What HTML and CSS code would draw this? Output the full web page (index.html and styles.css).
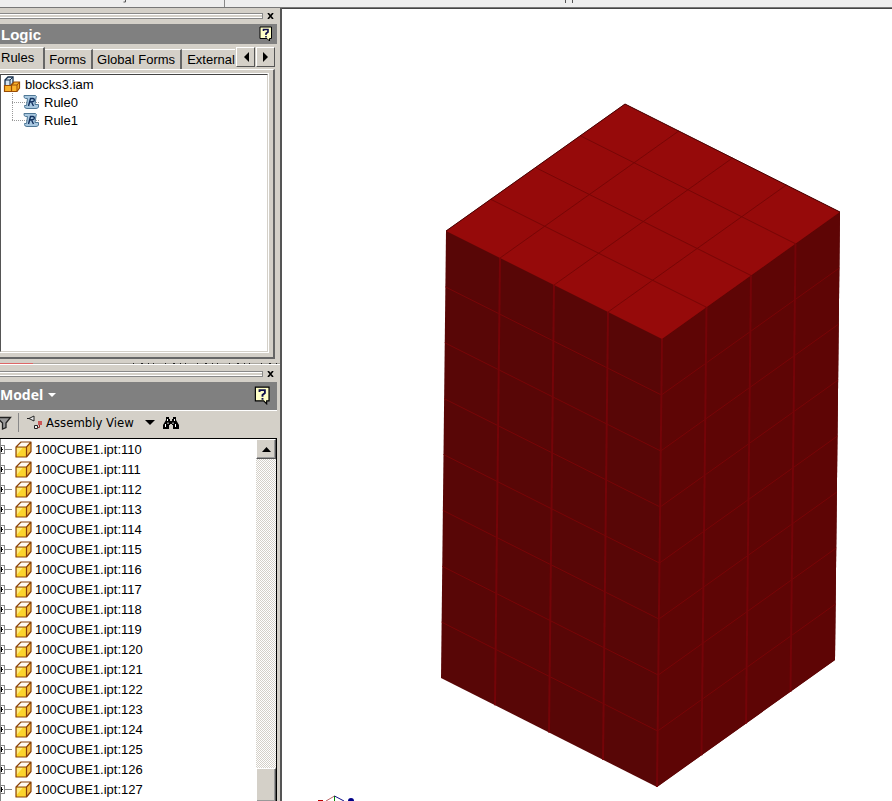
FILE: index.html
```
<!DOCTYPE html>
<html lang="en">
<head>
    <meta charset="UTF-8">
    <meta name="viewport" content="width=device-width, initial-scale=1.0">
    <title>blocks3.iam</title>
    <link rel="stylesheet" href="styles.css">
</head>
<body>
    <svg class="defs" width="0" height="0" aria-hidden="true">
        <symbol id="icon-part" viewBox="0 0 17 17">
            <path d="M1 6 6 1H16V10.500L11.500 16H1Z" fill="#fbd42c"/>
            <path d="M1 6 6 1H16L11.500 6Z" fill="#fffaf0"/>
            <path d="M11.500 6 16 1V10.500L11.500 16Z" fill="#f6bc3c"/>
            <path d="M1.500 14V6.500H8Z" fill="#ffec80"/>
            <path d="M1 6 6 1H16V10.500L11.500 16H1ZM1 6H11.500V16M11.500 6 16 1" fill="none" stroke="#8a4208" stroke-width="1.200" stroke-linejoin="round"/>
        </symbol>
        <symbol id="icon-rule" viewBox="0 0 17 16">
            <path d="M1 1.500H12.500Q14 2 13 4L12 10.500H15.500V13Q15 14.500 13 14.500H4Q1.500 14.500 1.500 12.500V11.500H3.500L4.500 4.500H2.500Q.5 4 1 1.500Z" fill="#a9c8e0" stroke="#4f7896"/>
            <path d="M5.500 12 7.500 4.500H10Q12 5 11 7Q10 8 7 8M8.500 8 10.500 12" fill="none" stroke="#12305e" stroke-width="1.400"/>
        </symbol>
        <symbol id="icon-help" viewBox="0 0 14 16">
            <path d="M1 1H12.500V12.500H10.500V15L8 12.500H1Z" fill="#ffffc8" stroke="#000"/>
            <path d="M4.500 5V3.500H9V6L7 7.500V9M7 10V11.500" fill="none" stroke="#10104c" stroke-width="1.600"/>
        </symbol>
    </svg>

    <header class="ribbon">
        <svg width="600" height="7" aria-hidden="true">
            <path d="M125.500 0V2H123.500M565.500 0V3M572.500 0V3" fill="none" stroke="#555"/>
            <path d="M224.500 0V7" stroke="#888"/>
        </svg>
    </header>

    <div class="workspace">
        <aside class="sidebar">
            <section class="dock logic">
                <div class="gripper"><span class="grip"></span><button class="close" aria-label="Close Logic"><svg width="7" height="6"><path d="M1 0 6 6M6 0 1 6" stroke="#000" stroke-width="1.600"/></svg></button></div>
                <div class="titlebar">
                    <h2>Logic</h2>
                    <button class="help" aria-label="Help"><svg width="14" height="16"><use href="#icon-help"/></svg></button>
                </div>
                <div class="tabs">
                    <div class="tab-list">
                        <button class="tab active">Rules</button>
                        <button class="tab">Forms</button>
                        <button class="tab">Global Forms</button>
                        <button class="tab">External</button>
                    </div>
                    <button class="arrow" aria-label="Previous tabs"><svg width="6" height="10"><path d="M6 0V10L1 5Z"/></svg></button>
                    <button class="arrow" aria-label="Next tabs"><svg width="6" height="10"><path d="M0 0V10L5 5Z"/></svg></button>
                </div>
                <div class="tab-page">
                    <div class="rule-tree">
                        <div class="tree-root">
                            <svg width="18" height="17" viewBox="0 0 18 17">
                                <path d="M2 4 5 1H10V7L7.500 10H2Z" fill="#d3e4f2" stroke="#172f4b" stroke-width="1.300"/>
                                <path d="M2 4H7V9M7 4 10 1" fill="none" stroke="#172f4b"/>
                                <path d="M1.500 9.500H8.500V15.500H1.500ZM8.500 9 11 6H16.500V12L14 15.500H8.500Z" fill="#fbb32b" stroke="#994c05" stroke-width="1.200"/>
                                <path d="M8.500 9H14V15M14 9 16.500 6" fill="none" stroke="#994c05"/>
                            </svg>
                            <span>blocks3.iam</span>
                        </div>
                        <ul>
                            <li><svg width="17" height="16"><use href="#icon-rule"/></svg><span>Rule0</span></li>
                            <li><svg width="17" height="16"><use href="#icon-rule"/></svg><span>Rule1</span></li>
                        </ul>
                    </div>
                </div>
            </section>

            <svg class="divider" width="280" height="3" aria-hidden="true">
                <path d="M0 .5H33" stroke="#d66"/>
                <path d="M33 .5H280" stroke="#aaa7a0"/>
                <path d="M133 .5H280" stroke="#222" stroke-dasharray="1 7 2 5 1 4 1 11"/>
                <path d="M0 1.500H280" stroke="#fff"/>
            </svg>

            <section class="dock model">
                <div class="gripper"><span class="grip"></span><button class="close" aria-label="Close Model"><svg width="7" height="6"><path d="M1 0 6 6M6 0 1 6" stroke="#000" stroke-width="1.600"/></svg></button></div>
                <div class="titlebar">
                    <h2>Model <svg width="8" height="4"><path d="M0 0H8L4 4Z" fill="#fff"/></svg></h2>
                    <button class="help" aria-label="Help"><svg width="17" height="19"><use href="#icon-help"/></svg></button>
                </div>
                <div class="toolbar">
                    <button class="filter" aria-label="Filter">
                        <svg width="12" height="14" viewBox="0 0 12 14"><path d="M-3 1.500H10.500L6 7V11.500L2.500 13V7Z" fill="#999" stroke="#222" stroke-width="1.300"/></svg>
                    </button>
                    <button class="view">
                        <svg width="16" height="15" viewBox="0 0 16 15">
                            <path d="M7 1 2 3.500 7 6ZM0 3.500H2M7.500 10.500H10.500V13.500H7.500Z" fill="#eee" stroke="#222"/>
                            <path d="M10.500 12.500H12.500V8" fill="none" stroke="#833"/>
                            <path d="M11 6H15V10H11Z" fill="#c55"/>
                        </svg>
                        <span>Assembly View</span>
                        <svg width="10" height="5"><path d="M0 0H10L5 5Z"/></svg>
                    </button>
                    <button class="find" aria-label="Find">
                        <svg width="16" height="14" viewBox="0 0 16 14">
                            <path d="M3 1H6V3H7V5H9V3H10V1H13V4L16 9V13H10V9H9V8H7V9H6V13H0V9L3 4Z"/>
                            <path d="M4.500 3V5M11.500 3V5M2.500 8V11M12.500 8V11M5 6.500V8M10 6.500V8" stroke="#fff"/>
                        </svg>
                    </button>
                </div>
                <div class="browser">
                    <ul id="parts"></ul>
                    <div class="scrollbar">
                        <button class="scroll-up" aria-label="Scroll up"><svg width="9" height="5"><path d="M0 5H9L4.500 0Z"/></svg></button>
                        <div class="track"></div>
                        <div class="thumb"></div>
                    </div>
                </div>
            </section>
        </aside>

        <main class="viewport">
            <svg viewBox="282 9 610 792" role="img" aria-label="Stack of red cubes">
                <path d="M446 231 625 104 840 212 835 660 657 787 441 678Z" fill="#580606"/>
                <path d="M662 339 840 212 835 660 657 787Z" fill="#5e0505"/>
                <path d="M625 104 840 212 662 339 446 231Z" fill="#960a0a"/>
                <g id="grid"></g>
                <path d="M446 231 625 104 840 212" fill="none" stroke="#4c0505"/>
                <path d="M318 801H323" stroke="#b00" stroke-width="2"/>
                <path d="M326 801 334.500 796" stroke="#b66"/>
                <path d="M334.500 796V801" stroke="#080"/>
                <path d="M334.500 796 344 801" stroke="#118"/>
                <circle cx="351" cy="801" r="3" fill="#008"/>
            </svg>
        </main>
    </div>

    <script src="script.js"></script>
</body>
</html>
```
FILE: styles.css
```
* {
    box-sizing: border-box;
}

body {
    margin: 0;
    height: 100vh;
    display: flex;
    flex-direction: column;
    overflow: hidden;
    font-family: "Liberation Sans", Arial, sans-serif;
    font-size: 13px;
    color: #000;
    background: #d4d0c8;
}

button {
    margin: 0;
    padding: 0;
    border: none;
    background: none;
    font: inherit;
    color: inherit;
}

svg {
    display: block;
    flex-shrink: 0;
}

ul {
    list-style: none;
    margin: 0;
    padding: 0;
}

.defs {
    position: absolute;
}

.ribbon {
    height: 8px;
    flex-shrink: 0;
    background: #eee;
    border-bottom: 1px solid #777;
    overflow: hidden;
}

.workspace {
    flex: 1;
    min-height: 0;
    display: flex;
}

.sidebar {
    width: 282px;
    flex-shrink: 0;
    display: flex;
    flex-direction: column;
    border-right: 2px solid #555;
}

.dock {
    padding-right: 3px;
}

.gripper {
    height: 16px;
    display: flex;
    align-items: center;
    gap: 4px;
}

.grip {
    width: 263px;
    height: 6px;
    border-top: 1px solid #888;
    border-right: 1px solid #888;
    border-bottom: 1px solid #888;
    background: linear-gradient(#fff 0 1px, #d4d0c8 1px 3px, #fff 3px);
}

.titlebar {
    display: flex;
    align-items: center;
    justify-content: space-between;
    height: 20px;
    padding-right: 4px;
    background: #808080;
    color: #fff;
}

.titlebar h2 {
    display: flex;
    align-items: center;
    gap: 5px;
    margin: 0;
    padding: 1px 0 0 1px;
    font-size: 15px;
    line-height: 20px;
}

.tabs {
    display: flex;
    height: 25px;
    padding: 3px 2px 0 0;
    gap: 1px;
}

.tab-list {
    flex: 1;
    min-width: 0;
    display: flex;
    align-items: flex-end;
    overflow: hidden;
}

.tab {
    height: 20px;
    padding: 0 5px 0 4px;
    white-space: nowrap;
    line-height: 19px;
    border-top: 1px solid #fff;
    border-right: 2px solid #666;
}

.tab.active {
    height: 22px;
    padding: 0 9px 4px 1px;
}

.tab:last-child {
    padding-right: 0;
    padding-left: 5px;
    border-right: none;
}

.arrow {
    width: 19px;
    height: 20px;
    display: grid;
    place-items: center;
    border: 1px solid;
    border-color: #fff #555 #555 #fff;
}

.tab-page {
    height: 290px;
    margin-right: 2px;
    padding: 4px 5px 5px 0;
    border-top: 1px solid #fff;
    border-right: 2px solid #666;
    border-bottom: 2px solid #666;
}

.rule-tree {
    height: 100%;
    padding-left: 2px;
    background: #fff;
    border: 1px solid #d4d0c8;
    border-top: 1px solid #444;
    border-left: 1px solid #555;
    outline: 1px solid #fff;
}

.tree-root {
    display: flex;
    align-items: center;
    gap: 4px;
    height: 18px;
}

.rule-tree ul {
    margin-left: 9px;
}

.rule-tree li {
    display: flex;
    align-items: center;
    height: 18px;
    background:
        linear-gradient(90deg, #999 50%, transparent 50%) 0 9px / 2px 1px repeat-x,
        linear-gradient(#999 50%, transparent 50%) 0 0 / 1px 2px repeat-y;
}

.rule-tree li:last-child {
    background:
        linear-gradient(90deg, #999 50%, transparent 50%) 0 9px / 2px 1px repeat-x,
        linear-gradient(#fff, #fff) 0 9px / 1px 9px no-repeat,
        linear-gradient(#999 50%, transparent 50%) 0 0 / 1px 2px repeat-y;
}

.rule-tree li svg {
    margin-left: 11px;
}

.rule-tree li span {
    flex: 1;
    padding-left: 4px;
    background: #fff;
}

.divider {
    margin-top: 4px;
}

.model {
    flex: 1;
    min-height: 0;
    display: flex;
    flex-direction: column;
}

.model .titlebar {
    height: 28px;
    padding-right: 6px;
    padding-bottom: 2px;
}

.model h2 {
    padding: 0;
    font-family: "Open Sans", sans-serif;
    font-size: 14px;
}

.toolbar {
    display: flex;
    align-items: center;
    height: 28px;
    padding-bottom: 4px;
    border-top: 1px solid #fff;
}

.filter {
    width: 19px;
    height: 19px;
    border-right: 1px solid #888;
}

.view {
    display: flex;
    align-items: center;
    margin-left: 8px;
    font-family: "DejaVu Sans Condensed", sans-serif;
}

.view span {
    width: 102px;
    padding-left: 3px;
    text-align: left;
    white-space: nowrap;
}

.find {
    margin-left: 8px;
}

.browser {
    flex: 1;
    min-height: 0;
    display: flex;
    background: #fff;
    border-top: 1px solid #000;
    border-right: 1px solid #000;
    overflow: hidden;
}

#parts {
    flex: 1;
    border-left: 1px solid #888;
}

#parts li {
    display: flex;
    align-items: center;
    height: 20px;
}

.expand {
    width: 4px;
    height: 9px;
    border: 1px solid #888;
    border-left: none;
    background:
        linear-gradient(#000, #000) 0 3px / 2px 1px no-repeat,
        linear-gradient(#000, #000) 0 1px / 1px 5px no-repeat;
}

.branch {
    width: 7px;
    height: 1px;
    margin-right: 3px;
    background: #888;
}

#parts span:last-child {
    padding-left: 3px;
}

.scrollbar {
    width: 20px;
    display: flex;
    flex-direction: column;
}

.scroll-up,
.thumb {
    flex-shrink: 0;
    background: #d4d0c8;
    border: 1px solid;
    border-color: #fff #555 #555 #fff;
    box-shadow: inset -1px -1px #999;
}

.scroll-up {
    height: 20px;
    display: grid;
    place-items: center;
}

.track {
    flex: 1;
    background: repeating-conic-gradient(#d4d0c8 0 25%, #fff 0 50%) 0 0 / 2px 2px;
}

.thumb {
    height: 33px;
    border-bottom: none;
}

.viewport {
    flex: 1;
    min-width: 0;
    background: #fff;
    border-top: 1px solid #444;
}

.viewport > svg {
    width: 100%;
    height: 100%;
}

.top-line {
    stroke: #780606;
}

.edge-line {
    stroke: #740408;
    stroke-width: 2px;
}

.left-line {
    stroke: #780507;
}

.right-line {
    stroke: #780507;
}
```
FILE: script.js
```
const parts = document.getElementById("parts");
for (let n = 110; n <= 127; n++) {
    const li = document.createElement("li");
    li.innerHTML = `<button class="expand" aria-label="Expand"></button><span class="branch"></span>
        <svg width="17" height="17"><use href="#icon-part"/></svg><span>100CUBE1.ipt:${n}</span>`;
    parts.appendChild(li);
}

// corners of the block stack
const back = [625, 104], left = [446, 231], right = [840, 212], front = [662, 339];
const leftLow = [441, 678], rightLow = [835, 660], frontLow = [657, 787];
const grid = document.getElementById("grid");

function between(a, b, t) {
    return [a[0] + (b[0] - a[0]) * t, a[1] + (b[1] - a[1]) * t];
}

function drawLine(a, b, name) {
    const line = document.createElementNS("http://www.w3.org/2000/svg", "path");
    line.setAttribute("d", `M${a} L${b}`);
    line.setAttribute("class", name);
    grid.appendChild(line);
}

for (let i = 1; i < 8; i++) {
    const t = i / 8;
    drawLine(between(left, leftLow, t), between(front, frontLow, t), "left-line");
    drawLine(between(front, frontLow, t), between(right, rightLow, t), "right-line");
}

for (let i = 1; i < 4; i++) {
    const t = i / 4;
    drawLine(between(left, back, t), between(front, right, t), "top-line");
    drawLine(between(left, front, t), between(back, right, t), "top-line");
    drawLine(between(left, front, t), between(leftLow, frontLow, t), "edge-line");
    drawLine(between(front, right, t), between(frontLow, rightLow, t), "edge-line");
}
drawLine(front, frontLow, "edge-line");
```
